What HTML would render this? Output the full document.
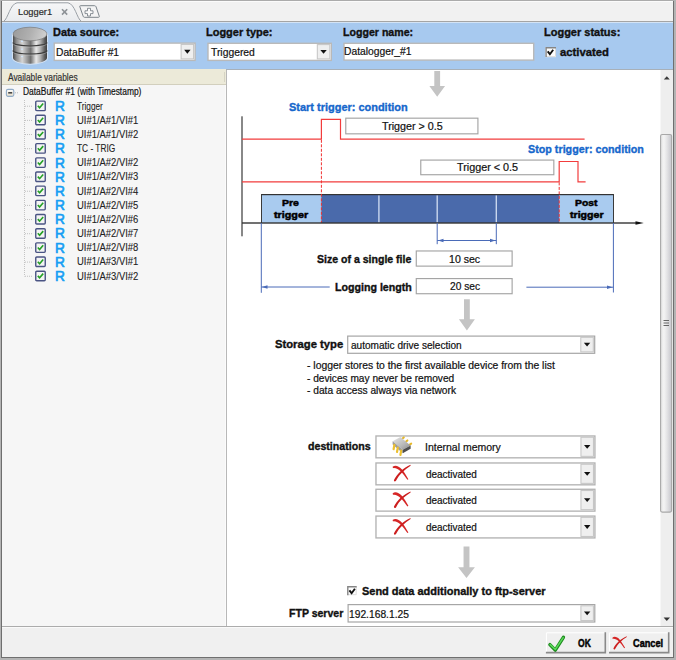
<!DOCTYPE html>
<html><head><meta charset="utf-8"><style>
html,body{margin:0;padding:0;}
body{width:676px;height:660px;position:relative;overflow:hidden;background:#f0f0f0;font-family:"Liberation Sans", sans-serif;}
.a{position:absolute;}
.t{position:absolute;white-space:nowrap;transform-origin:0 0;font-family:"Liberation Sans", sans-serif;}
svg{position:absolute;left:0;top:0;}
</style></head><body>
<svg width='676' height='660' viewBox='0 0 676 660'><rect x='0' y='0' width='676' height='22' fill='#f1f1f1'/><rect x='0' y='0' width='676' height='1' fill='#ababab'/><rect x='2' y='1' width='671' height='1' fill='#fbfbfb'/><defs><linearGradient id='tabg' x1='0' y1='0' x2='0' y2='1'><stop offset='0' stop-color='#f6f7f8'/><stop offset='1' stop-color='#e9ebee'/></linearGradient><linearGradient id='dbg' x1='0' y1='0' x2='1' y2='0'><stop offset='0' stop-color='#6a6a6a'/><stop offset='0.2' stop-color='#9a9a9a'/><stop offset='0.45' stop-color='#d8d8d8'/><stop offset='0.6' stop-color='#7e7e7e'/><stop offset='0.75' stop-color='#e6e6e6'/><stop offset='0.9' stop-color='#9a9a9a'/><stop offset='1' stop-color='#4e4e4e'/></linearGradient><linearGradient id='dbtop' x1='0' y1='0' x2='1' y2='1'><stop offset='0' stop-color='#8e8e8e'/><stop offset='0.5' stop-color='#c9c9c9'/><stop offset='1' stop-color='#dcdcdc'/></linearGradient><linearGradient id='thumb' x1='0' y1='0' x2='1' y2='0'><stop offset='0' stop-color='#e4e4e4'/><stop offset='0.3' stop-color='#f4f4f4'/><stop offset='0.6' stop-color='#e2e2e4'/><stop offset='1' stop-color='#c6c6cc'/></linearGradient><linearGradient id='chip' x1='0' y1='0' x2='1' y2='1'><stop offset='0' stop-color='#e8e8e8'/><stop offset='0.6' stop-color='#b8b8b8'/><stop offset='1' stop-color='#8a8a8a'/></linearGradient></defs><path d='M3.5,21.5 C8,19 10,4 17,2.8 L68,2.8 C75,4 77,19 81.5,21.5 Z' fill='url(#tabg)' stroke='#9aa0a6' stroke-width='1'/><path d='M62,9.2 L67.2,14.6 M67.2,9.2 L62,14.6' stroke='#8d9297' stroke-width='1.6'/><path d='M80.5,5.7 L94.5,5.7 Q95.5,5.7 96,6.7 L99.3,16.3 Q99.5,17.3 98.5,17.3 L84.5,17.3 Q83.5,17.3 83.2,16.3 L79.8,6.7 Q79.5,5.7 80.5,5.7 Z' fill='#f4f4f4' stroke='#7d858b' stroke-width='1'/><path d='M87.5,8.3 H90.5 V10.8 H93 V13.6 H90.5 V16 H87.5 V13.6 H85 V10.8 H87.5 Z' fill='#fafafa' stroke='#7d858b' stroke-width='0.9'/><rect x='0' y='21' width='676' height='1' fill='#a4a4a4'/><rect x='2' y='22' width='671' height='47' fill='#a7c9ef'/><rect x='2' y='22' width='671' height='1' fill='#d3e3f5'/><defs><linearGradient id='dbb' x1='13' y1='0' x2='47' y2='0' gradientUnits='userSpaceOnUse'><stop offset='0' stop-color='#4a4a4a'/><stop offset='0.1' stop-color='#8c8c8c'/><stop offset='0.27' stop-color='#d6d6d6'/><stop offset='0.42' stop-color='#9a9a9a'/><stop offset='0.52' stop-color='#707070'/><stop offset='0.68' stop-color='#e9e9e9'/><stop offset='0.8' stop-color='#b4b4b4'/><stop offset='0.93' stop-color='#5e5e5e'/><stop offset='1' stop-color='#3e3e3e'/></linearGradient><linearGradient id='dbt' x1='13' y1='28' x2='47' y2='40' gradientUnits='userSpaceOnUse'><stop offset='0' stop-color='#9a9a9a'/><stop offset='0.5' stop-color='#b0b0b0'/><stop offset='1' stop-color='#d6d6d6'/></linearGradient></defs><path d='M12.6,34 V57.8 A17.4,6.2 0 0 0 47.4,57.8 V34 Z' fill='none' stroke='#dfe9f5' stroke-width='1.4' opacity='0.8'/><path d='M13,34 V57.8 A17,6 0 0 0 47,57.8 V34 Z' fill='url(#dbb)'/><path d='M13,42.4 A17,3.6 0 0 0 47,42.4' fill='none' stroke='#3c3c3c' stroke-width='1.2'/><path d='M13,43.6 A17,3.6 0 0 0 47,43.6' fill='none' stroke='#c8c8c8' stroke-width='0.8' opacity='0.5'/><path d='M13,50.6 A17,3.4 0 0 0 47,50.6' fill='none' stroke='#3c3c3c' stroke-width='1.2'/><path d='M13,51.8 A17,3.4 0 0 0 47,51.8' fill='none' stroke='#c8c8c8' stroke-width='0.8' opacity='0.5'/><ellipse cx='30' cy='34' rx='17' ry='6.8' fill='url(#dbt)' stroke='#7a7a7a' stroke-width='0.7'/><rect x='21.2' y='40.6' width='1.6' height='1.4' fill='#cfe6ff'/><rect x='21.2' y='48.6' width='1.6' height='1.2' fill='#cfe6ff'/><rect x='21.2' y='56' width='1.6' height='1.2' fill='#cfe6ff'/><rect x='54.2' y='43.1' width='140.9' height='17.300000000000004' fill='#fff' stroke='#b9b9b9' stroke-width='1.4'/><rect x='181.1' y='44.4' width='12.5' height='14.500000000000007' fill='#efefef' stroke='#c4c4c4' stroke-width='1'/><path d='M184.15,49.85000000000001 L190.54999999999998,49.85000000000001 L187.35,53.650000000000006 Z' fill='#111'/><rect x='208.0' y='43.300000000000004' width='123.29999999999998' height='17.1' fill='#fff' stroke='#b9b9b9' stroke-width='1.4'/><rect x='317.3' y='44.6' width='12.5' height='14.300000000000004' fill='#efefef' stroke='#c4c4c4' stroke-width='1'/><path d='M320.35,49.95 L326.75,49.95 L323.55,53.75 Z' fill='#111'/><rect x='344.0' y='43.300000000000004' width='189.69999999999996' height='16.799999999999997' fill='#fff' stroke='#b9b9b9' stroke-width='1.4'/><rect x='545.4' y='47' width='10.600000000000023' height='10.100000000000001' fill='#fdfdfd'/><path d='M555.5,47.5 V56.6 H545.9' fill='none' stroke='#dcdcdc' stroke-width='1'/><path d='M546.1,57.1 V47.7 H556' fill='none' stroke='#858585' stroke-width='1.4'/><path d='M547.6999999999999,51.4 L549.9,54.2 L553.1999999999999,49.8' fill='none' stroke='#111' stroke-width='1.9'/><rect x='2' y='69' width='224' height='15' fill='#ecead9'/><rect x='2' y='84' width='224' height='1' fill='#d2cfbd'/><rect x='224' y='72' width='1' height='10' fill='#d6d4c4'/><rect x='2' y='85' width='224' height='541' fill='#f6f6f6'/><rect x='226' y='69' width='1' height='557' fill='#b8b8b8'/><rect x='225' y='85' width='1' height='541' fill='#fbfbfb'/><defs><linearGradient id='mbox' x1='0' y1='0' x2='0' y2='1'><stop offset='0' stop-color='#ffffff'/><stop offset='1' stop-color='#e6dcc8'/></linearGradient></defs><rect x='6.4' y='89.4' width='7.4' height='7' rx='1.6' fill='url(#mbox)' stroke='#91acc8' stroke-width='1.1'/><rect x='8.2' y='92.2' width='4' height='1.3' fill='#1e1e1e'/><path d='M15,92.8 H19' stroke='#bbb' stroke-width='1' stroke-dasharray='1,1'/><path d='M24.5,100 V276.53999999999996' stroke='#c4c4c4' stroke-width='1' stroke-dasharray='1,1'/><path d='M25,106.20 H32' stroke='#c0c0c0' stroke-width='1' stroke-dasharray='1,1'/><g transform='translate(35,100.4)'><rect x='0.75' y='0.75' width='9.5' height='9.5' rx='1' fill='#f4f4f4' stroke='#4a5484' stroke-width='1.4'/><path d='M2.8,5.4 L4.6,7.4 L8.2,3.2' fill='none' stroke='#24a024' stroke-width='1.6'/></g><path d='M25,120.37 H32' stroke='#c0c0c0' stroke-width='1' stroke-dasharray='1,1'/><g transform='translate(35,114.57000000000001)'><rect x='0.75' y='0.75' width='9.5' height='9.5' rx='1' fill='#f4f4f4' stroke='#4a5484' stroke-width='1.4'/><path d='M2.8,5.4 L4.6,7.4 L8.2,3.2' fill='none' stroke='#24a024' stroke-width='1.6'/></g><path d='M25,134.54 H32' stroke='#c0c0c0' stroke-width='1' stroke-dasharray='1,1'/><g transform='translate(35,128.74)'><rect x='0.75' y='0.75' width='9.5' height='9.5' rx='1' fill='#f4f4f4' stroke='#4a5484' stroke-width='1.4'/><path d='M2.8,5.4 L4.6,7.4 L8.2,3.2' fill='none' stroke='#24a024' stroke-width='1.6'/></g><path d='M25,148.71 H32' stroke='#c0c0c0' stroke-width='1' stroke-dasharray='1,1'/><g transform='translate(35,142.91)'><rect x='0.75' y='0.75' width='9.5' height='9.5' rx='1' fill='#f4f4f4' stroke='#4a5484' stroke-width='1.4'/><path d='M2.8,5.4 L4.6,7.4 L8.2,3.2' fill='none' stroke='#24a024' stroke-width='1.6'/></g><path d='M25,162.88 H32' stroke='#c0c0c0' stroke-width='1' stroke-dasharray='1,1'/><g transform='translate(35,157.08)'><rect x='0.75' y='0.75' width='9.5' height='9.5' rx='1' fill='#f4f4f4' stroke='#4a5484' stroke-width='1.4'/><path d='M2.8,5.4 L4.6,7.4 L8.2,3.2' fill='none' stroke='#24a024' stroke-width='1.6'/></g><path d='M25,177.05 H32' stroke='#c0c0c0' stroke-width='1' stroke-dasharray='1,1'/><g transform='translate(35,171.25)'><rect x='0.75' y='0.75' width='9.5' height='9.5' rx='1' fill='#f4f4f4' stroke='#4a5484' stroke-width='1.4'/><path d='M2.8,5.4 L4.6,7.4 L8.2,3.2' fill='none' stroke='#24a024' stroke-width='1.6'/></g><path d='M25,191.22 H32' stroke='#c0c0c0' stroke-width='1' stroke-dasharray='1,1'/><g transform='translate(35,185.42000000000002)'><rect x='0.75' y='0.75' width='9.5' height='9.5' rx='1' fill='#f4f4f4' stroke='#4a5484' stroke-width='1.4'/><path d='M2.8,5.4 L4.6,7.4 L8.2,3.2' fill='none' stroke='#24a024' stroke-width='1.6'/></g><path d='M25,205.39 H32' stroke='#c0c0c0' stroke-width='1' stroke-dasharray='1,1'/><g transform='translate(35,199.59)'><rect x='0.75' y='0.75' width='9.5' height='9.5' rx='1' fill='#f4f4f4' stroke='#4a5484' stroke-width='1.4'/><path d='M2.8,5.4 L4.6,7.4 L8.2,3.2' fill='none' stroke='#24a024' stroke-width='1.6'/></g><path d='M25,219.56 H32' stroke='#c0c0c0' stroke-width='1' stroke-dasharray='1,1'/><g transform='translate(35,213.76)'><rect x='0.75' y='0.75' width='9.5' height='9.5' rx='1' fill='#f4f4f4' stroke='#4a5484' stroke-width='1.4'/><path d='M2.8,5.4 L4.6,7.4 L8.2,3.2' fill='none' stroke='#24a024' stroke-width='1.6'/></g><path d='M25,233.73 H32' stroke='#c0c0c0' stroke-width='1' stroke-dasharray='1,1'/><g transform='translate(35,227.93)'><rect x='0.75' y='0.75' width='9.5' height='9.5' rx='1' fill='#f4f4f4' stroke='#4a5484' stroke-width='1.4'/><path d='M2.8,5.4 L4.6,7.4 L8.2,3.2' fill='none' stroke='#24a024' stroke-width='1.6'/></g><path d='M25,247.90 H32' stroke='#c0c0c0' stroke-width='1' stroke-dasharray='1,1'/><g transform='translate(35,242.1)'><rect x='0.75' y='0.75' width='9.5' height='9.5' rx='1' fill='#f4f4f4' stroke='#4a5484' stroke-width='1.4'/><path d='M2.8,5.4 L4.6,7.4 L8.2,3.2' fill='none' stroke='#24a024' stroke-width='1.6'/></g><path d='M25,262.07 H32' stroke='#c0c0c0' stroke-width='1' stroke-dasharray='1,1'/><g transform='translate(35,256.27)'><rect x='0.75' y='0.75' width='9.5' height='9.5' rx='1' fill='#f4f4f4' stroke='#4a5484' stroke-width='1.4'/><path d='M2.8,5.4 L4.6,7.4 L8.2,3.2' fill='none' stroke='#24a024' stroke-width='1.6'/></g><path d='M25,276.24 H32' stroke='#c0c0c0' stroke-width='1' stroke-dasharray='1,1'/><g transform='translate(35,270.44)'><rect x='0.75' y='0.75' width='9.5' height='9.5' rx='1' fill='#f4f4f4' stroke='#4a5484' stroke-width='1.4'/><path d='M2.8,5.4 L4.6,7.4 L8.2,3.2' fill='none' stroke='#24a024' stroke-width='1.6'/></g><rect x='227' y='69' width='433' height='557' fill='#ffffff'/><rect x='226' y='69' width='447' height='1' fill='#a8b0b8'/><rect x='660' y='70' width='13' height='556' fill='#eeeeee'/><rect x='660' y='70' width='1' height='556' fill='#f7f7f7'/><path d='M663.8,79.6 L666.8,76.2 L669.8,79.6 Z' fill='#3a3a3a'/><path d='M663.6,617.6 L666.8,621 L670,617.6 Z' fill='#333'/><rect x='660.6' y='134.5' width='11' height='377.6' rx='1.6' fill='url(#thumb)' stroke='#a8a8a8' stroke-width='1.1'/><path d='M663.5,320.5 H669 M663.5,323 H669 M663.5,325.5 H669' stroke='#666' stroke-width='1'/><path d='M434.3,71 H440.09999999999997 V86 H445.05 L437.2,96.7 L429.34999999999997,86 H434.3 Z' fill='#c4c4c4'/><path d='M464.0,299.3 H469.79999999999995 V319.3 H474.9 L466.9,330.5 L458.9,319.3 H464.0 Z' fill='#c4c4c4'/><path d='M463.55,546.5 H469.45 V567.2 H474.9 L466.5,577.9 L458.1,567.2 H463.55 Z' fill='#c4c4c4'/><rect x='241.2' y='116.3' width='1.6' height='120' fill='#6b6b6b'/><path d='M242,139.2 H321.4 V119.4 H340.5 V139.2 H584.6' fill='none' stroke='#f23c3c' stroke-width='1.2'/><path d='M242,181.8 H559.2 V161.5 H578 V181.8 H585.6' fill='none' stroke='#f23c3c' stroke-width='1.2'/><rect x='345.775' y='118.175' width='132.15' height='15.650000000000011' fill='#fff' stroke='#a4a4a4' stroke-width='1.15'/><rect x='420.775' y='160.075' width='133.04999999999998' height='14.650000000000011' fill='#fff' stroke='#a4a4a4' stroke-width='1.15'/><rect x='261.4' y='194.6' width='352.1' height='28.4' fill='#4a6aab'/><rect x='261.4' y='194.6' width='60' height='28.4' fill='#a9cbef'/><rect x='559.2' y='194.6' width='54.3' height='28.4' fill='#a9cbef'/><rect x='261' y='194' width='353' height='1.2' fill='#333'/><rect x='261' y='194' width='1' height='29' fill='#3a3a3a'/><rect x='613' y='194' width='1' height='29' fill='#3a3a3a'/><rect x='378.2' y='195.5' width='1.4' height='27' fill='#c9d6ee'/><rect x='436.5' y='195.5' width='1.4' height='27' fill='#c9d6ee'/><rect x='495.6' y='195.5' width='1.4' height='27' fill='#c9d6ee'/><path d='M321.4,139.8 V223 M559.2,182.4 V223' stroke='#f03030' stroke-width='1' stroke-dasharray='3,1.5'/><rect x='242' y='222.3' width='397' height='1.4' fill='#353535'/><path d='M635.5,221.3 L643.8,223 L635.5,224.7 Z' fill='#111'/><path d='M437.2,223 V244.2 M496.3,223 V244.2 M437.2,240.5 H496.3 M261.3,223 V292.8 M613.4,223 V292.5 M261.3,287 H329.7 M526.4,287.2 H613.3' fill='none' stroke='#4a6bb8' stroke-width='1'/><path d='M438,240.5 L443.5,238.8 L443.5,242.2 Z M495.5,240.5 L490,238.8 L490,242.2 Z M262,287 L267.5,285.3 L267.5,288.7 Z M612.6,287.2 L607,285.5 L607,288.9 Z' fill='#4a6bb8'/><rect x='416.275' y='250.975' width='95.85000000000005' height='15.149999999999983' fill='#fff' stroke='#a4a4a4' stroke-width='1.15'/><rect x='416.275' y='278.575' width='95.85000000000005' height='15.150000000000011' fill='#fff' stroke='#a4a4a4' stroke-width='1.15'/><rect x='347.70000000000005' y='336.1' width='246.99999999999994' height='17.199999999999978' fill='#fff' stroke='#a6a6a6' stroke-width='1.2'/><rect x='580.8' y='337.3' width='12.5' height='14.599999999999966' fill='#efefef' stroke='#c4c4c4' stroke-width='1'/><path d='M583.8499999999999,342.8 L590.25,342.8 L587.05,346.6 Z' fill='#111'/><rect x='375.975' y='435.975' width='218.95000000000002' height='21.849999999999987' fill='#fff' stroke='#b3b3b3' stroke-width='1.35'/><rect x='580.95' y='437.25000000000006' width='12.5' height='19.09999999999991' fill='#efefef' stroke='#c4c4c4' stroke-width='1'/><path d='M584.0,445.0 L590.4000000000001,445.0 L587.2,448.8 Z' fill='#111'/><rect x='375.975' y='462.975' width='218.95000000000002' height='21.849999999999987' fill='#fff' stroke='#b3b3b3' stroke-width='1.35'/><rect x='580.95' y='464.25000000000006' width='12.5' height='19.09999999999991' fill='#efefef' stroke='#c4c4c4' stroke-width='1'/><path d='M584.0,472.0 L590.4000000000001,472.0 L587.2,475.8 Z' fill='#111'/><rect x='375.975' y='489.27500000000003' width='218.95000000000002' height='21.849999999999987' fill='#fff' stroke='#b3b3b3' stroke-width='1.35'/><rect x='580.95' y='490.55000000000007' width='12.5' height='19.09999999999991' fill='#efefef' stroke='#c4c4c4' stroke-width='1'/><path d='M584.0,498.3 L590.4000000000001,498.3 L587.2,502.1 Z' fill='#111'/><rect x='375.975' y='516.0749999999999' width='218.95000000000002' height='21.850000000000044' fill='#fff' stroke='#b3b3b3' stroke-width='1.35'/><rect x='580.95' y='517.35' width='12.5' height='19.100000000000023' fill='#efefef' stroke='#c4c4c4' stroke-width='1'/><path d='M584.0,525.1000000000001 L590.4000000000001,525.1000000000001 L587.2,528.9000000000001 Z' fill='#111'/><g><path d='M402.2,438.8 L403.8,437.4 M405.8,441.8 L407.4,440.4 M409.4,444.8 L411.2,443.6' stroke='#e6b828' stroke-width='2' stroke-linecap='round'/><path d='M392.6,441.2 L400.4,437 L410.6,445.6 L402.8,449.8 Z' fill='url(#chip)'/><path d='M392.6,441.2 L402.8,449.8 L402.8,453.2 L392.6,444.6 Z' fill='#9c9c9c'/><path d='M402.8,449.8 L410.6,445.6 L410.6,448.8 L402.8,453.2 Z' fill='#4e4e4e'/><path d='M394.4,444.8 L393.6,449.2 M397.8,447.6 L397,452 M401.2,450.6 L400.4,455' stroke='#ecc030' stroke-width='2.2' stroke-linecap='round'/></g><g transform='translate(392.6,464.6) scale(1.0)'><path d='M0,2.2 C2.5,0 6,1.2 9.2,4.6 C11.5,7.2 13.6,10.8 15.8,14.6 L14.8,15.2 C12.6,12 10.4,9.2 8.2,7 C5.6,4.4 3,3.2 0.4,3.6 Z' fill='#d62626'/><path d='M17.9,0.2 C14.5,1.6 11,3.8 8,6.6 C5,9.4 2.6,12.6 1.4,15.4 C1,16.8 2.4,17.4 3.4,16.2 C5,13 7.4,9.8 10,7.4 C12.4,5.2 15,3 18,1.2 Z' fill='#cc1e1e'/></g><g transform='translate(392.6,491.2) scale(1.0)'><path d='M0,2.2 C2.5,0 6,1.2 9.2,4.6 C11.5,7.2 13.6,10.8 15.8,14.6 L14.8,15.2 C12.6,12 10.4,9.2 8.2,7 C5.6,4.4 3,3.2 0.4,3.6 Z' fill='#d62626'/><path d='M17.9,0.2 C14.5,1.6 11,3.8 8,6.6 C5,9.4 2.6,12.6 1.4,15.4 C1,16.8 2.4,17.4 3.4,16.2 C5,13 7.4,9.8 10,7.4 C12.4,5.2 15,3 18,1.2 Z' fill='#cc1e1e'/></g><g transform='translate(392.6,517.8) scale(1.0)'><path d='M0,2.2 C2.5,0 6,1.2 9.2,4.6 C11.5,7.2 13.6,10.8 15.8,14.6 L14.8,15.2 C12.6,12 10.4,9.2 8.2,7 C5.6,4.4 3,3.2 0.4,3.6 Z' fill='#d62626'/><path d='M17.9,0.2 C14.5,1.6 11,3.8 8,6.6 C5,9.4 2.6,12.6 1.4,15.4 C1,16.8 2.4,17.4 3.4,16.2 C5,13 7.4,9.8 10,7.4 C12.4,5.2 15,3 18,1.2 Z' fill='#cc1e1e'/></g><rect x='347.1' y='586' width='9.599999999999966' height='9.200000000000045' fill='#fdfdfd'/><path d='M356.2,586.5 V594.7 H347.6' fill='none' stroke='#dcdcdc' stroke-width='1'/><path d='M347.8,595.2 V586.7 H356.7' fill='none' stroke='#858585' stroke-width='1.4'/><path d='M349.40000000000003,590.4 L351.6,593.2 L354.90000000000003,588.8' fill='none' stroke='#111' stroke-width='1.9'/><rect x='348.1' y='604.6' width='246.7' height='17.400000000000023' fill='#fff' stroke='#a6a6a6' stroke-width='1.2'/><rect x='580.9' y='605.8000000000001' width='12.5' height='14.799999999999955' fill='#efefef' stroke='#c4c4c4' stroke-width='1'/><path d='M583.9499999999999,611.4000000000001 L590.35,611.4000000000001 L587.15,615.2 Z' fill='#111'/><rect x='2' y='626' width='671' height='1' fill='#acacac'/><rect x='2' y='627' width='671' height='1' fill='#fafafa'/><rect x='545.9' y='632.3' width='60.39999999999998' height='21.1' fill='#efefef'/><path d='M546.4,653 V632.8 H605.3' fill='none' stroke='#ffffff' stroke-width='1'/><path d='M545.9,652.6 H605.3 V632.3' fill='none' stroke='#8a8a8a' stroke-width='1.6'/><rect x='609' y='632.3' width='60.700000000000045' height='21.1' fill='#efefef'/><path d='M609.5,653 V632.8 H668.7' fill='none' stroke='#ffffff' stroke-width='1'/><path d='M609,652.6 H668.7 V632.3' fill='none' stroke='#8a8a8a' stroke-width='1.6'/><path d='M549.9,644.6 L555.3,650.1 L563.4,637.3' fill='none' stroke='#1d8a1d' stroke-width='3.4' stroke-linecap='round' stroke-linejoin='round'/><path d='M550.2,644.6 L555.3,649.5 L563.2,637.6' fill='none' stroke='#5ad85a' stroke-width='1.5' stroke-linecap='round' stroke-linejoin='round'/><g transform='translate(612.4,636) scale(0.8)'><path d='M0,2.2 C2.5,0 6,1.2 9.2,4.6 C11.5,7.2 13.6,10.8 15.8,14.6 L14.8,15.2 C12.6,12 10.4,9.2 8.2,7 C5.6,4.4 3,3.2 0.4,3.6 Z' fill='#d62626'/><path d='M17.9,0.2 C14.5,1.6 11,3.8 8,6.6 C5,9.4 2.6,12.6 1.4,15.4 C1,16.8 2.4,17.4 3.4,16.2 C5,13 7.4,9.8 10,7.4 C12.4,5.2 15,3 18,1.2 Z' fill='#cc1e1e'/></g><rect x='0' y='0' width='1' height='660' fill='#b4b4b4'/><rect x='1' y='1' width='1' height='658' fill='#6f6f6f'/><rect x='673' y='1' width='1' height='658' fill='#6f6f6f'/><rect x='674' y='0' width='2' height='660' fill='#b4b4b4'/><rect x='1' y='657' width='673' height='1' fill='#6f6f6f'/><rect x='0' y='658' width='676' height='2' fill='#b4b4b4'/></svg>
<div class='t' style='left:17.72px;top:7.20px;font-size:9.5px;line-height:9.5px;font-weight:normal;color:#2b2b2b;transform:scaleX(0.9788);-webkit-text-stroke:0.2px #2b2b2b;'>Logger1</div><div class='t' style='left:53.06px;top:27.00px;font-size:10.5px;line-height:10.5px;font-weight:bold;color:#111;transform:scaleX(1.0403);-webkit-text-stroke:0.35px #111;'>Data source:</div><div class='t' style='left:56.12px;top:46.90px;font-size:10.5px;line-height:10.5px;font-weight:normal;color:#111;transform:scaleX(0.9762);-webkit-text-stroke:0.2px #111;'>DataBuffer #1</div><div class='t' style='left:206.25px;top:27.00px;font-size:10.5px;line-height:10.5px;font-weight:bold;color:#111;transform:scaleX(1.0452);-webkit-text-stroke:0.35px #111;'>Logger type:</div><div class='t' style='left:210.60px;top:46.90px;font-size:10.5px;line-height:10.5px;font-weight:normal;color:#111;transform:scaleX(0.9841);-webkit-text-stroke:0.2px #111;'>Triggered</div><div class='t' style='left:342.79px;top:27.00px;font-size:10.5px;line-height:10.5px;font-weight:bold;color:#111;transform:scaleX(1.0103);-webkit-text-stroke:0.35px #111;'>Logger name:</div><div class='t' style='left:344.32px;top:46.00px;font-size:10.5px;line-height:10.5px;font-weight:normal;color:#111;transform:scaleX(0.9806);-webkit-text-stroke:0.2px #111;'>Datalogger_#1</div><div class='t' style='left:544.45px;top:27.00px;font-size:10.5px;line-height:10.5px;font-weight:bold;color:#111;transform:scaleX(1.0465);-webkit-text-stroke:0.35px #111;'>Logger status:</div><div class='t' style='left:560.40px;top:47.00px;font-size:10.5px;line-height:10.5px;font-weight:bold;color:#111;transform:scaleX(1.0733);-webkit-text-stroke:0.35px #111;'>activated</div><div class='t' style='left:7.80px;top:72.50px;font-size:10px;line-height:10px;font-weight:normal;color:#333;transform:scaleX(0.8361);-webkit-text-stroke:0.2px #333;'>Available variables</div><div class='t' style='left:22.86px;top:87.00px;font-size:10px;line-height:10px;font-weight:normal;color:#111;transform:scaleX(0.8432);-webkit-text-stroke:0.2px #111;'>DataBuffer #1 (with Timestamp)</div><div class='t' style='left:288.70px;top:101.50px;font-size:11px;line-height:11px;font-weight:bold;color:#1667cc;transform:scaleX(0.9966);-webkit-text-stroke:0.35px #1667cc;'>Start trigger: condition</div><div class='t' style='left:382.10px;top:121.50px;font-size:10px;line-height:10px;font-weight:normal;color:#111;transform:scaleX(1.0732);-webkit-text-stroke:0.2px #111;'>Trigger &gt; 0.5</div><div class='t' style='left:528.30px;top:144.00px;font-size:11px;line-height:11px;font-weight:bold;color:#1667cc;transform:scaleX(0.9771);-webkit-text-stroke:0.35px #1667cc;'>Stop trigger: condition</div><div class='t' style='left:457.30px;top:163.00px;font-size:10px;line-height:10px;font-weight:normal;color:#111;transform:scaleX(1.0786);-webkit-text-stroke:0.2px #111;'>Trigger &lt; 0.5</div><div class='t' style='left:282.40px;top:197.90px;font-size:9.6px;line-height:9.6px;font-weight:bold;color:#000;transform:scaleX(1.0938);-webkit-text-stroke:0.35px #000;-webkit-text-stroke:0.5px #000;'>Pre</div><div class='t' style='left:274.30px;top:210.40px;font-size:9.6px;line-height:9.6px;font-weight:bold;color:#000;transform:scaleX(1.1226);-webkit-text-stroke:0.35px #000;-webkit-text-stroke:0.5px #000;'>trigger</div><div class='t' style='left:575.30px;top:197.90px;font-size:9.6px;line-height:9.6px;font-weight:bold;color:#000;transform:scaleX(1.0810);-webkit-text-stroke:0.35px #000;-webkit-text-stroke:0.5px #000;'>Post</div><div class='t' style='left:569.60px;top:210.40px;font-size:9.6px;line-height:9.6px;font-weight:bold;color:#000;transform:scaleX(1.1032);-webkit-text-stroke:0.35px #000;-webkit-text-stroke:0.5px #000;'>trigger</div><div class='t' style='left:316.60px;top:254.00px;font-size:10.5px;line-height:10.5px;font-weight:bold;color:#111;transform:scaleX(1.0043);-webkit-text-stroke:0.35px #111;'>Size of a single file</div><div class='t' style='left:448.54px;top:254.50px;font-size:10px;line-height:10px;font-weight:normal;color:#111;transform:scaleX(1.0571);-webkit-text-stroke:0.2px #111;'>10 sec</div><div class='t' style='left:334.99px;top:281.50px;font-size:10.5px;line-height:10.5px;font-weight:bold;color:#111;transform:scaleX(1.0135);-webkit-text-stroke:0.35px #111;'>Logging length</div><div class='t' style='left:449.60px;top:282.00px;font-size:10px;line-height:10px;font-weight:normal;color:#111;transform:scaleX(1.0207);-webkit-text-stroke:0.2px #111;'>20 sec</div><div class='t' style='left:274.50px;top:338.70px;font-size:10.5px;line-height:10.5px;font-weight:bold;color:#111;transform:scaleX(1.0714);-webkit-text-stroke:0.35px #111;'>Storage type</div><div class='t' style='left:351.10px;top:340.60px;font-size:10px;line-height:10px;font-weight:normal;color:#111;transform:scaleX(1.0055);-webkit-text-stroke:0.2px #111;'>automatic drive selection</div><div class='t' style='left:307.10px;top:361.20px;font-size:10px;line-height:10px;font-weight:normal;color:#111;transform:scaleX(1.0368);-webkit-text-stroke:0.2px #111;'>- logger stores to the first available device from the list</div><div class='t' style='left:307.10px;top:373.60px;font-size:10px;line-height:10px;font-weight:normal;color:#111;transform:scaleX(1.0145);-webkit-text-stroke:0.2px #111;'>- devices may never be removed</div><div class='t' style='left:307.10px;top:386.00px;font-size:10px;line-height:10px;font-weight:normal;color:#111;transform:scaleX(1.0192);-webkit-text-stroke:0.2px #111;'>- data access always via network</div><div class='t' style='left:307.80px;top:441.00px;font-size:10.5px;line-height:10.5px;font-weight:bold;color:#111;transform:scaleX(1.0113);-webkit-text-stroke:0.35px #111;'>destinations</div><div class='t' style='left:424.95px;top:443.10px;font-size:10px;line-height:10px;font-weight:normal;color:#111;transform:scaleX(1.0493);-webkit-text-stroke:0.2px #111;'>Internal memory</div><div class='t' style='left:426.00px;top:469.60px;font-size:10px;line-height:10px;font-weight:normal;color:#111;transform:scaleX(0.9941);-webkit-text-stroke:0.2px #111;'>deactivated</div><div class='t' style='left:426.00px;top:496.10px;font-size:10px;line-height:10px;font-weight:normal;color:#111;transform:scaleX(0.9941);-webkit-text-stroke:0.2px #111;'>deactivated</div><div class='t' style='left:426.00px;top:522.80px;font-size:10px;line-height:10px;font-weight:normal;color:#111;transform:scaleX(0.9941);-webkit-text-stroke:0.2px #111;'>deactivated</div><div class='t' style='left:362.40px;top:586.00px;font-size:10.5px;line-height:10.5px;font-weight:bold;color:#111;transform:scaleX(1.0449);-webkit-text-stroke:0.35px #111;'>Send data additionally to ftp-server</div><div class='t' style='left:288.50px;top:608.00px;font-size:10.5px;line-height:10.5px;font-weight:bold;color:#111;transform:scaleX(1.0038);-webkit-text-stroke:0.35px #111;'>FTP server</div><div class='t' style='left:349.47px;top:609.60px;font-size:10px;line-height:10px;font-weight:normal;color:#111;transform:scaleX(1.0263);-webkit-text-stroke:0.2px #111;'>192.168.1.25</div><div class='t' style='left:577.90px;top:638.00px;font-size:11px;line-height:11px;font-weight:bold;color:#000;transform:scaleX(0.7765);-webkit-text-stroke:0.35px #000;-webkit-text-stroke:0.45px #000;'>OK</div><div class='t' style='left:632.60px;top:637.50px;font-size:11px;line-height:11px;font-weight:bold;color:#000;transform:scaleX(0.8361);-webkit-text-stroke:0.35px #000;-webkit-text-stroke:0.45px #000;'>Cancel</div><div class='t' style='left:77.20px;top:100.60px;font-size:10.5px;line-height:10.5px;font-weight:normal;color:#222;transform:scaleX(0.7848);-webkit-text-stroke:0.2px #222;-webkit-text-stroke:0.1px #222;'>Trigger</div><div class='t' style='left:54.86px;top:98.90px;font-size:14.5px;line-height:14.5px;font-weight:normal;color:#169ef4;transform:scaleX(0.9444);-webkit-text-stroke:0.2px #169ef4;-webkit-text-stroke:0.7px #169ef4;'>R</div><div class='t' style='left:76.50px;top:114.77px;font-size:10.5px;line-height:10.5px;font-weight:normal;color:#222;transform:scaleX(0.8985);-webkit-text-stroke:0.2px #222;-webkit-text-stroke:0.1px #222;'>UI#1/A#1/VI#1</div><div class='t' style='left:54.86px;top:113.07px;font-size:14.5px;line-height:14.5px;font-weight:normal;color:#169ef4;transform:scaleX(0.9444);-webkit-text-stroke:0.2px #169ef4;-webkit-text-stroke:0.7px #169ef4;'>R</div><div class='t' style='left:76.50px;top:128.94px;font-size:10.5px;line-height:10.5px;font-weight:normal;color:#222;transform:scaleX(0.8985);-webkit-text-stroke:0.2px #222;-webkit-text-stroke:0.1px #222;'>UI#1/A#1/VI#2</div><div class='t' style='left:54.86px;top:127.24px;font-size:14.5px;line-height:14.5px;font-weight:normal;color:#169ef4;transform:scaleX(0.9444);-webkit-text-stroke:0.2px #169ef4;-webkit-text-stroke:0.7px #169ef4;'>R</div><div class='t' style='left:77.00px;top:143.11px;font-size:10.5px;line-height:10.5px;font-weight:normal;color:#222;transform:scaleX(0.7917);-webkit-text-stroke:0.2px #222;-webkit-text-stroke:0.1px #222;'>TC - TRIG</div><div class='t' style='left:54.86px;top:141.41px;font-size:14.5px;line-height:14.5px;font-weight:normal;color:#169ef4;transform:scaleX(0.9444);-webkit-text-stroke:0.2px #169ef4;-webkit-text-stroke:0.7px #169ef4;'>R</div><div class='t' style='left:76.50px;top:157.28px;font-size:10.5px;line-height:10.5px;font-weight:normal;color:#222;transform:scaleX(0.8985);-webkit-text-stroke:0.2px #222;-webkit-text-stroke:0.1px #222;'>UI#1/A#2/VI#2</div><div class='t' style='left:54.86px;top:155.58px;font-size:14.5px;line-height:14.5px;font-weight:normal;color:#169ef4;transform:scaleX(0.9444);-webkit-text-stroke:0.2px #169ef4;-webkit-text-stroke:0.7px #169ef4;'>R</div><div class='t' style='left:76.50px;top:171.45px;font-size:10.5px;line-height:10.5px;font-weight:normal;color:#222;transform:scaleX(0.8985);-webkit-text-stroke:0.2px #222;-webkit-text-stroke:0.1px #222;'>UI#1/A#2/VI#3</div><div class='t' style='left:54.86px;top:169.75px;font-size:14.5px;line-height:14.5px;font-weight:normal;color:#169ef4;transform:scaleX(0.9444);-webkit-text-stroke:0.2px #169ef4;-webkit-text-stroke:0.7px #169ef4;'>R</div><div class='t' style='left:76.50px;top:185.62px;font-size:10.5px;line-height:10.5px;font-weight:normal;color:#222;transform:scaleX(0.8985);-webkit-text-stroke:0.2px #222;-webkit-text-stroke:0.1px #222;'>UI#1/A#2/VI#4</div><div class='t' style='left:54.86px;top:183.92px;font-size:14.5px;line-height:14.5px;font-weight:normal;color:#169ef4;transform:scaleX(0.9444);-webkit-text-stroke:0.2px #169ef4;-webkit-text-stroke:0.7px #169ef4;'>R</div><div class='t' style='left:76.50px;top:199.79px;font-size:10.5px;line-height:10.5px;font-weight:normal;color:#222;transform:scaleX(0.8985);-webkit-text-stroke:0.2px #222;-webkit-text-stroke:0.1px #222;'>UI#1/A#2/VI#5</div><div class='t' style='left:54.86px;top:198.09px;font-size:14.5px;line-height:14.5px;font-weight:normal;color:#169ef4;transform:scaleX(0.9444);-webkit-text-stroke:0.2px #169ef4;-webkit-text-stroke:0.7px #169ef4;'>R</div><div class='t' style='left:76.50px;top:213.96px;font-size:10.5px;line-height:10.5px;font-weight:normal;color:#222;transform:scaleX(0.8985);-webkit-text-stroke:0.2px #222;-webkit-text-stroke:0.1px #222;'>UI#1/A#2/VI#6</div><div class='t' style='left:54.86px;top:212.26px;font-size:14.5px;line-height:14.5px;font-weight:normal;color:#169ef4;transform:scaleX(0.9444);-webkit-text-stroke:0.2px #169ef4;-webkit-text-stroke:0.7px #169ef4;'>R</div><div class='t' style='left:76.50px;top:228.13px;font-size:10.5px;line-height:10.5px;font-weight:normal;color:#222;transform:scaleX(0.8985);-webkit-text-stroke:0.2px #222;-webkit-text-stroke:0.1px #222;'>UI#1/A#2/VI#7</div><div class='t' style='left:54.86px;top:226.43px;font-size:14.5px;line-height:14.5px;font-weight:normal;color:#169ef4;transform:scaleX(0.9444);-webkit-text-stroke:0.2px #169ef4;-webkit-text-stroke:0.7px #169ef4;'>R</div><div class='t' style='left:76.50px;top:242.30px;font-size:10.5px;line-height:10.5px;font-weight:normal;color:#222;transform:scaleX(0.8985);-webkit-text-stroke:0.2px #222;-webkit-text-stroke:0.1px #222;'>UI#1/A#2/VI#8</div><div class='t' style='left:54.86px;top:240.60px;font-size:14.5px;line-height:14.5px;font-weight:normal;color:#169ef4;transform:scaleX(0.9444);-webkit-text-stroke:0.2px #169ef4;-webkit-text-stroke:0.7px #169ef4;'>R</div><div class='t' style='left:76.50px;top:256.47px;font-size:10.5px;line-height:10.5px;font-weight:normal;color:#222;transform:scaleX(0.8985);-webkit-text-stroke:0.2px #222;-webkit-text-stroke:0.1px #222;'>UI#1/A#3/VI#1</div><div class='t' style='left:54.86px;top:254.77px;font-size:14.5px;line-height:14.5px;font-weight:normal;color:#169ef4;transform:scaleX(0.9444);-webkit-text-stroke:0.2px #169ef4;-webkit-text-stroke:0.7px #169ef4;'>R</div><div class='t' style='left:76.50px;top:270.64px;font-size:10.5px;line-height:10.5px;font-weight:normal;color:#222;transform:scaleX(0.8985);-webkit-text-stroke:0.2px #222;-webkit-text-stroke:0.1px #222;'>UI#1/A#3/VI#2</div><div class='t' style='left:54.86px;top:268.94px;font-size:14.5px;line-height:14.5px;font-weight:normal;color:#169ef4;transform:scaleX(0.9444);-webkit-text-stroke:0.2px #169ef4;-webkit-text-stroke:0.7px #169ef4;'>R</div>
</body></html>
